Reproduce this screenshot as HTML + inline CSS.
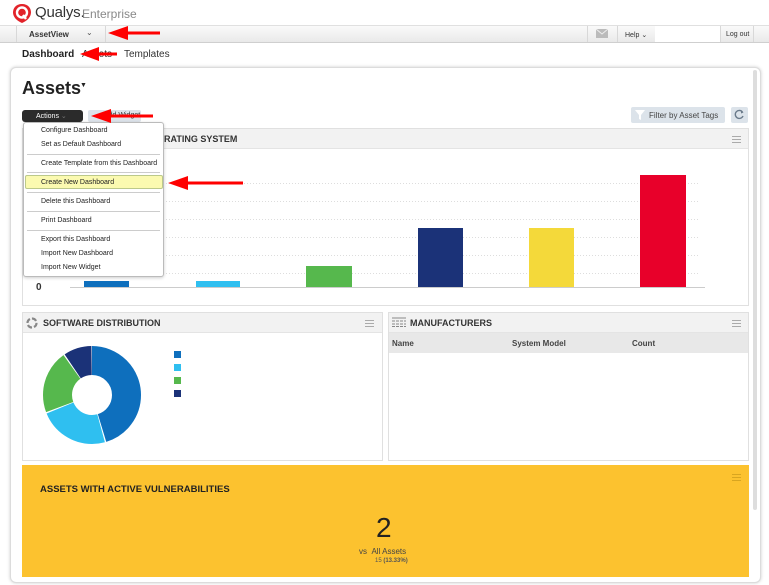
<!DOCTYPE html>
<html><head><meta charset="utf-8"><style>
*{margin:0;padding:0;box-sizing:border-box}
body{width:769px;height:585px;background:#fff;font-family:"Liberation Sans",sans-serif;position:relative;overflow:hidden;color:#333}
.a{position:absolute;white-space:nowrap}
.hdr{background:#f2f2f2;border-bottom:1px solid #e4e4e4}
.ht{font-weight:bold;font-size:9px;color:#333}
.menu{font-size:7px;color:#222}
.hb{position:absolute;width:9px;height:1px;background:#aaa}
</style></head><body>
<svg class="a" style="left:12px;top:3px" width="20" height="20" viewBox="0 0 20 20"><path d="M10 1 C4 1 1 5 1 9.5 C1 14 5 18 10 20 C15 18 19 14 19 9.5 C19 5 16 1 10 1Z" fill="#e2232a"/><circle cx="10" cy="9.5" r="5" fill="none" stroke="#fff" stroke-width="2.4"/><path d="M11 12 L14 16" stroke="#fff" stroke-width="2.4"/></svg>
<div class="a" style="left:35px;top:4px;font-size:15px;color:#333;letter-spacing:-0.2px">Qualys.</div>
<div class="a" style="left:82px;top:7px;font-size:12px;color:#888">Enterprise</div>
<div class="a" style="left:0;top:25px;width:769px;height:18px;background:linear-gradient(#fafafa,#e9e9e9);border-top:1px solid #e0e0e0;border-bottom:1px solid #cfcfcf"></div>
<div class="a" style="left:16px;top:26px;width:1px;height:16px;background:#d8d8d8"></div>
<div class="a" style="left:105px;top:26px;width:1px;height:16px;background:#d8d8d8"></div>
<div class="a" style="left:29px;top:30px;font-size:8px;font-weight:bold;color:#333">AssetView</div>
<div class="a" style="left:86px;top:28px;font-size:8px;color:#555">⌄</div>
<div class="a" style="left:587px;top:26px;width:1px;height:16px;background:#d8d8d8"></div>
<div class="a" style="left:596px;top:29px;width:12px;height:9px;background:#bbb"></div>
<svg class="a" style="left:596px;top:29px" width="12" height="9"><path d="M0 0 L6 5 L12 0" stroke="#eee" fill="none"/></svg>
<div class="a" style="left:617px;top:26px;width:1px;height:16px;background:#d8d8d8"></div>
<div class="a" style="left:625px;top:31px;font-size:7px;color:#333">Help ⌄</div>
<div class="a" style="left:655px;top:26px;width:65px;height:16px;background:#fff"></div>
<div class="a" style="left:720px;top:26px;width:1px;height:16px;background:#d8d8d8"></div>
<div class="a" style="left:726px;top:31px;font-size:7px;color:#333">Log out</div>
<div class="a" style="left:753px;top:26px;width:1px;height:16px;background:#d8d8d8"></div>
<div class="a" style="left:22px;top:49px;font-size:10px;font-weight:bold;color:#222">Dashboard</div>
<div class="a" style="left:82px;top:49px;font-size:10px;color:#333">Assets</div>
<div class="a" style="left:124px;top:49px;font-size:10px;color:#333">Templates</div>
<div class="a" style="left:10px;top:67px;width:751px;height:516px;border:1px solid #dcdcdc;border-radius:6px;box-shadow:0 0 3px #ccc;background:#fff"></div>
<div class="a" style="left:753px;top:70px;width:4px;height:440px;background:#ddd;border-radius:2px"></div>
<div class="a" style="left:22px;top:78px;font-size:18px;font-weight:bold;color:#222">Assets</div>
<div class="a" style="left:80px;top:82px;font-size:7px;color:#222">▼</div>
<div class="a" style="left:88px;top:110px;width:53px;height:12px;background:#dde3ea;border-radius:2px;font-size:7px;color:#333;padding:2px 0 0 16px">Add Widget</div>
<div class="a" style="left:22px;top:110px;width:61px;height:12px;background:#2b2b2b;border-radius:3px;color:#fff;font-size:7px;padding:2px 0 0 14px">Actions <span style="color:#777">⌄</span></div>
<div class="a" style="left:631px;top:107px;width:94px;height:16px;background:#dce3ea;border-radius:2px;font-size:8px;color:#444;padding:4px 0 0 18px">Filter by Asset Tags</div>
<svg class="a" style="left:635px;top:110px" width="10" height="10"><path d="M0 0H10L6 5V10L4 9V5Z" fill="#fff"/></svg>
<div class="a" style="left:731px;top:107px;width:17px;height:16px;background:#dce3ea;border-radius:2px"></div>
<svg class="a" style="left:734px;top:109px" width="11" height="11"><path d="M8.5 3 A4 4 0 1 0 9 7" stroke="#6a7a8a" stroke-width="1.4" fill="none"/><path d="M7 1 L9.5 3.5 L7 4.5Z" fill="#6a7a8a"/></svg>
<div class="a" style="left:22px;top:128px;width:727px;height:178px;border:1px solid #e0e0e0;background:#fff"></div>
<div class="a hdr" style="left:23px;top:129px;width:725px;height:20px"></div>
<div class="a ht" style="left:145px;top:134px">OPERATING SYSTEM</div>
<div class="hb" style="left:732px;top:136px"></div><div class="hb" style="left:732px;top:139px"></div><div class="hb" style="left:732px;top:142px"></div>
<div class="a" style="left:70px;top:166px;width:630px;height:110px;background:repeating-linear-gradient(90deg,#ddd 0 1px,#fff 1px 3px)"></div>
<div class="a" style="left:70px;top:166px;width:630px;height:110px;background:repeating-linear-gradient(to bottom,#fff 0 17px,rgba(255,255,255,0) 17px 18px)"></div>
<div class="a" style="left:70px;top:287px;width:635px;height:1px;background:#ccc"></div>
<div class="a" style="left:36px;top:282px;font-size:10px;font-weight:bold">0</div>
<div class="a" style="left:84px;top:281px;width:45px;height:6px;background:#0e6fbd"></div>
<div class="a" style="left:196px;top:281px;width:44px;height:6px;background:#2fbff0"></div>
<div class="a" style="left:306px;top:266px;width:46px;height:21px;background:#56b84d"></div>
<div class="a" style="left:418px;top:228px;width:45px;height:59px;background:#1b3278"></div>
<div class="a" style="left:529px;top:228px;width:45px;height:59px;background:#f4d93a"></div>
<div class="a" style="left:640px;top:175px;width:46px;height:112px;background:#e8002a"></div>
<div class="a menu" style="left:23px;top:122px;width:141px;height:155px;background:#fff;border:1px solid #bbb;border-radius:3px;box-shadow:0 1px 3px rgba(0,0,0,.2)">
<div class="a" style="left:17px;top:4px">Configure Dashboard</div>
<div class="a" style="left:17px;top:18px">Set as Default Dashboard</div>
<div class="a" style="left:3px;top:31px;width:133px;height:1px;background:#ccc"></div>
<div class="a" style="left:17px;top:37px">Create Template from this Dashboard</div>
<div class="a" style="left:3px;top:49px;width:133px;height:1px;background:#ccc"></div>
<div class="a" style="left:1px;top:52px;width:138px;height:14px;background:#fbfab0;border:1px solid #bcc98a;border-radius:2px"></div>
<div class="a" style="left:17px;top:56px">Create New Dashboard</div>
<div class="a" style="left:3px;top:69px;width:133px;height:1px;background:#ccc"></div>
<div class="a" style="left:17px;top:75px">Delete this Dashboard</div>
<div class="a" style="left:3px;top:88px;width:133px;height:1px;background:#ccc"></div>
<div class="a" style="left:17px;top:94px">Print Dashboard</div>
<div class="a" style="left:3px;top:107px;width:133px;height:1px;background:#ccc"></div>
<div class="a" style="left:17px;top:113px">Export this Dashboard</div>
<div class="a" style="left:17px;top:127px">Import New Dashboard</div>
<div class="a" style="left:17px;top:141px">Import New Widget</div>
</div>
<div class="a" style="left:22px;top:312px;width:361px;height:149px;border:1px solid #e0e0e0"></div>
<div class="a hdr" style="left:23px;top:313px;width:359px;height:20px"></div>
<svg class="a" style="left:26px;top:317px" width="12" height="12"><circle cx="6" cy="6" r="4.5" stroke="#888" stroke-width="2.2" fill="none" stroke-dasharray="5 2"/></svg>
<div class="a ht" style="left:43px;top:318px">SOFTWARE DISTRIBUTION</div>
<div class="hb" style="left:365px;top:320px"></div><div class="hb" style="left:365px;top:323px"></div><div class="hb" style="left:365px;top:326px"></div>
<svg class="a" style="left:43px;top:346px" width="98" height="98" viewBox="0 0 98 98">
<g transform="rotate(-90 49 49)" fill="none" stroke-width="29">
<circle cx="49" cy="49" r="34.5" stroke="#0e6fbd" stroke-dasharray="98 216.8"/>
<circle cx="49" cy="49" r="34.5" stroke="#2fbff0" stroke-dasharray="0 99 50 216.8"/>
<circle cx="49" cy="49" r="34.5" stroke="#56b84d" stroke-dasharray="0 150 45 216.8"/>
<circle cx="49" cy="49" r="34.5" stroke="#1b3278" stroke-dasharray="0 196 20 216.8"/>
</g>
</svg>
<div class="a" style="left:174px;top:351px;width:7px;height:7px;background:#0e6fbd"></div>
<div class="a" style="left:174px;top:364px;width:7px;height:7px;background:#2fbff0"></div>
<div class="a" style="left:174px;top:377px;width:7px;height:7px;background:#56b84d"></div>
<div class="a" style="left:174px;top:390px;width:7px;height:7px;background:#1b3278"></div>
<div class="a" style="left:388px;top:312px;width:361px;height:149px;border:1px solid #e0e0e0"></div>
<div class="a hdr" style="left:389px;top:313px;width:359px;height:20px"></div>
<svg class="a" style="left:392px;top:317px" width="14" height="10"><g stroke="#888"><line x1="0" y1="1" x2="14" y2="1"/><line x1="0" y1="4" x2="14" y2="4" stroke-dasharray="3 1"/><line x1="0" y1="7" x2="14" y2="7" stroke-dasharray="3 1"/><line x1="0" y1="9.5" x2="14" y2="9.5" stroke-dasharray="3 1"/></g></svg>
<div class="a ht" style="left:410px;top:318px">MANUFACTURERS</div>
<div class="hb" style="left:732px;top:320px"></div><div class="hb" style="left:732px;top:323px"></div><div class="hb" style="left:732px;top:326px"></div>
<div class="a" style="left:389px;top:333px;width:359px;height:20px;background:#e8e8e8"></div>
<div class="a" style="left:392px;top:339px;font-size:8px;font-weight:bold;color:#444">Name</div>
<div class="a" style="left:512px;top:339px;font-size:8px;font-weight:bold;color:#444">System Model</div>
<div class="a" style="left:632px;top:339px;font-size:8px;font-weight:bold;color:#444">Count</div>
<div class="a" style="left:22px;top:465px;width:727px;height:112px;background:#fcc22f"></div>
<div class="hb" style="left:732px;top:474px;background:#d8a520"></div><div class="hb" style="left:732px;top:477px;background:#d8a520"></div><div class="hb" style="left:732px;top:480px;background:#d8a520"></div>
<div class="a" style="left:40px;top:484px;font-size:9.5px;font-weight:bold;color:#222">ASSETS WITH ACTIVE VULNERABILITIES</div>
<div class="a" style="left:376px;top:512px;font-size:28px;color:#222">2</div>
<div class="a" style="left:359px;top:547px;font-size:8px;color:#444">vs &nbsp;All Assets</div>
<div class="a" style="left:375px;top:558px;font-size:6px;color:#555">15 <b>(13.33%)</b></div>
<svg class="a" style="left:0;top:0" width="769" height="585">
<g fill="#f00" stroke="#f00">
<line x1="125" y1="33" x2="160" y2="33" stroke-width="3"/><path d="M108 33 L128 26 L128 40Z" stroke="none"/>
<line x1="96" y1="54" x2="117" y2="54" stroke-width="3"/><path d="M80 54 L99 47 L99 61Z" stroke="none"/>
<line x1="108" y1="116" x2="153" y2="116" stroke-width="3"/><path d="M91 116 L111 109 L111 123Z" stroke="none"/>
<line x1="185" y1="183" x2="243" y2="183" stroke-width="3"/><path d="M168 183 L188 176 L188 190Z" stroke="none"/>
</g></svg>
</body></html>
